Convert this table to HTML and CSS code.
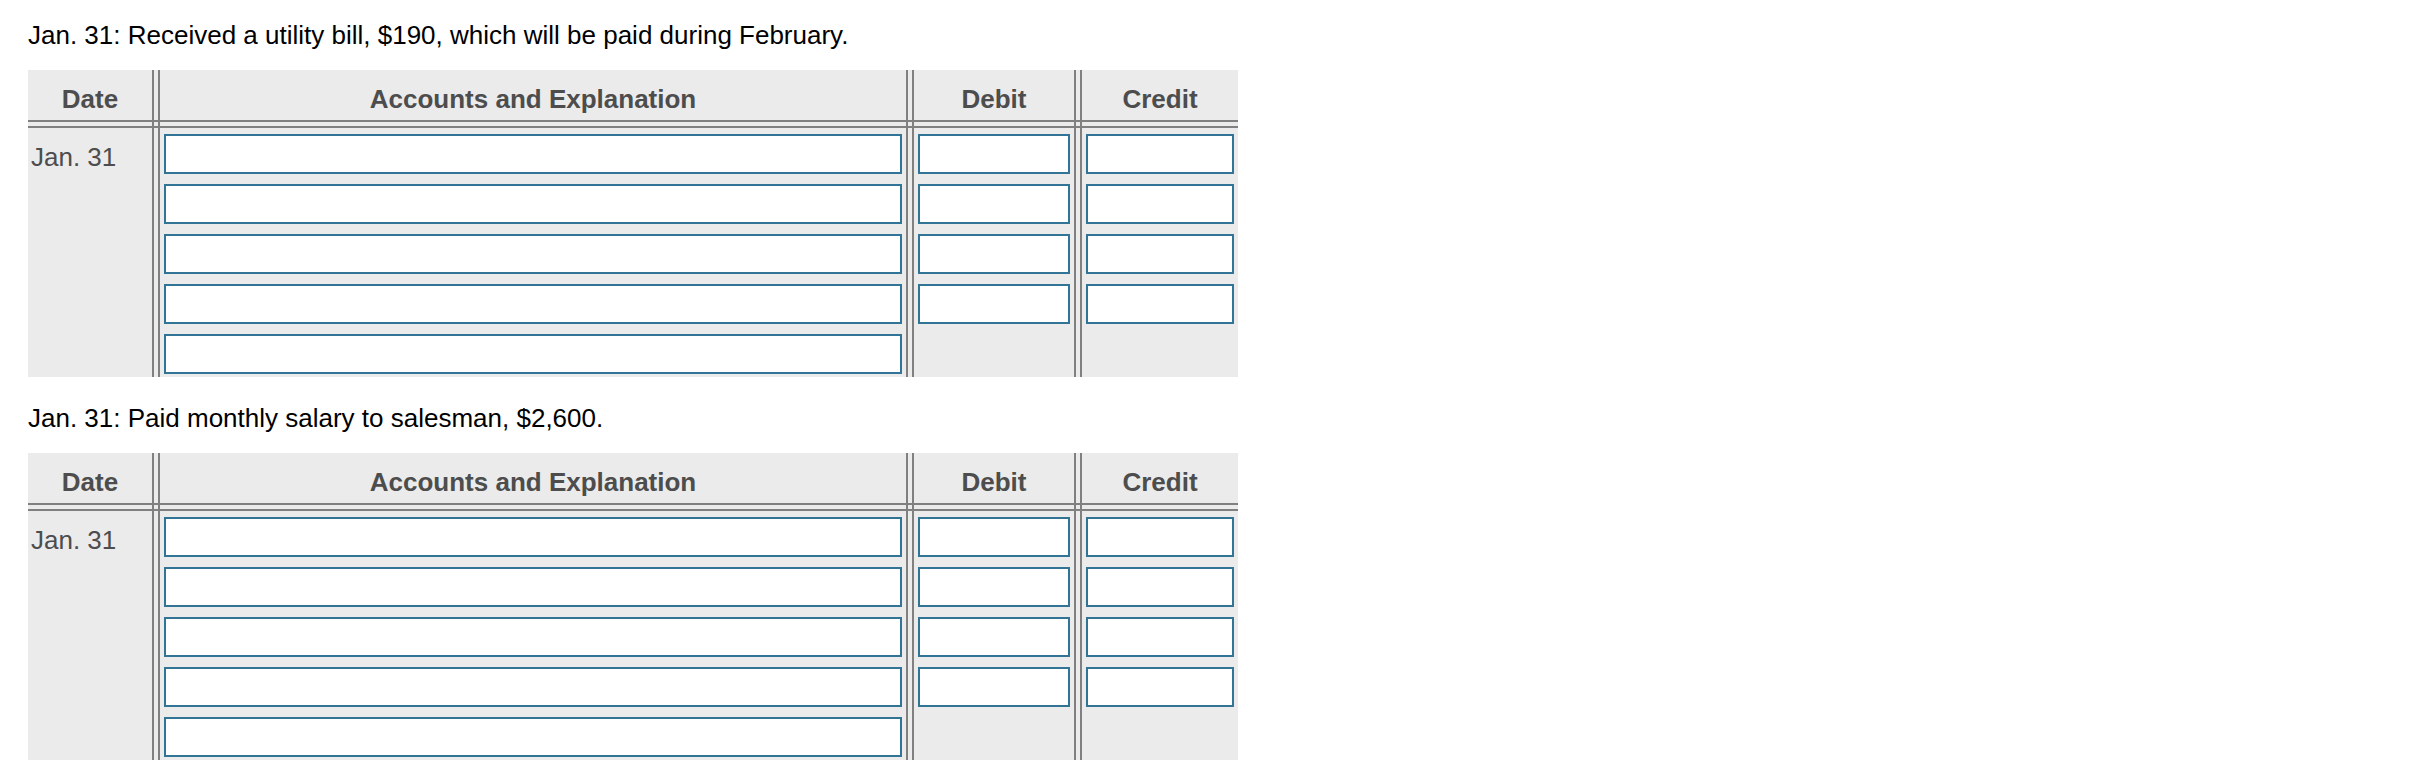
FILE: index.html
```html
<!DOCTYPE html>
<html lang="en">
<head>
<meta charset="utf-8">
<title>Journal entries</title>
<link rel="stylesheet" href="styles.css">
</head>
<body>
<div class="page">
  <section class="entry">
    <p class="prompt">Jan. 31: Received a utility bill, $190, which will be paid during February.</p>
    <div class="journal">
      <div class="head c1">Date</div>
      <div class="vsep s1"></div>
      <div class="head c3">Accounts and Explanation</div>
      <div class="vsep s2"></div>
      <div class="head c5">Debit</div>
      <div class="vsep s3"></div>
      <div class="head c7">Credit</div>
      <div class="hsep"></div>
      <div class="body date c1">Jan. 31</div>
      <div class="body fields c3">
        <input class="field" type="text"><input class="field" type="text"><input class="field" type="text"><input class="field" type="text"><input class="field" type="text">
      </div>
      <div class="body fields c5">
        <input class="field" type="text"><input class="field" type="text"><input class="field" type="text"><input class="field" type="text">
      </div>
      <div class="body fields c7">
        <input class="field" type="text"><input class="field" type="text"><input class="field" type="text"><input class="field" type="text">
      </div>
    </div>
  </section>
  <section class="entry">
    <p class="prompt">Jan. 31: Paid monthly salary to salesman, $2,600.</p>
    <div class="journal">
      <div class="head c1">Date</div>
      <div class="vsep s1"></div>
      <div class="head c3">Accounts and Explanation</div>
      <div class="vsep s2"></div>
      <div class="head c5">Debit</div>
      <div class="vsep s3"></div>
      <div class="head c7">Credit</div>
      <div class="hsep"></div>
      <div class="body date c1">Jan. 31</div>
      <div class="body fields c3">
        <input class="field" type="text"><input class="field" type="text"><input class="field" type="text"><input class="field" type="text"><input class="field" type="text">
      </div>
      <div class="body fields c5">
        <input class="field" type="text"><input class="field" type="text"><input class="field" type="text"><input class="field" type="text">
      </div>
      <div class="body fields c7">
        <input class="field" type="text"><input class="field" type="text"><input class="field" type="text"><input class="field" type="text">
      </div>
    </div>
  </section>
</div>
</body>
</html>
```

FILE: styles.css
```css
html, body {
  margin: 0;
  padding: 0;
  background: #ffffff;
}

.page {
  padding: 20px 0 0 28px;
  font-family: "Liberation Sans", Arial, Helvetica, sans-serif;
  font-size: 26px;
  color: #000000;
}

.entry + .entry {
  margin-top: 26px;
}

.prompt {
  margin: 0 0 20px 0;
  line-height: 30px;
  height: 30px;
  white-space: nowrap;
}

.journal {
  display: grid;
  grid-template-columns: 124px 8px 746px 8px 160px 8px 156px;
  grid-template-rows: 50px 8px auto;
  width: 1210px;
  background: #ebebeb;
}

.c1 { grid-column: 1; }
.c3 { grid-column: 3; }
.c5 { grid-column: 5; }
.c7 { grid-column: 7; }

.head {
  grid-row: 1;
  box-sizing: border-box;
  padding-top: 14px;
  line-height: 30px;
  text-align: center;
  font-weight: bold;
  color: #4d4d4d;
}

.vsep {
  grid-row: 1 / 4;
  box-sizing: border-box;
  border-left: 2px solid #808080;
  border-right: 2px solid #808080;
}
.s1 { grid-column: 2; }
.s2 { grid-column: 4; }
.s3 { grid-column: 6; }

.hsep {
  grid-row: 2;
  grid-column: 1 / -1;
  box-sizing: border-box;
  border-top: 2px solid #808080;
  border-bottom: 2px solid #808080;
}

.body {
  grid-row: 3;
}

.date {
  padding: 14px 0 0 3px;
  line-height: 30px;
  color: #4d4d4d;
}

.fields {
  display: flex;
  flex-direction: column;
  gap: 10px;
  padding: 6px 4px 3px 4px;
}

.field {
  display: block;
  box-sizing: border-box;
  width: 100%;
  height: 40px;
  margin: 0;
  padding: 0 6px;
  border: 2px solid #327496;
  border-radius: 0;
  background: #ffffff;
  font: inherit;
  outline: none;
  appearance: none;
  -webkit-appearance: none;
}
```
